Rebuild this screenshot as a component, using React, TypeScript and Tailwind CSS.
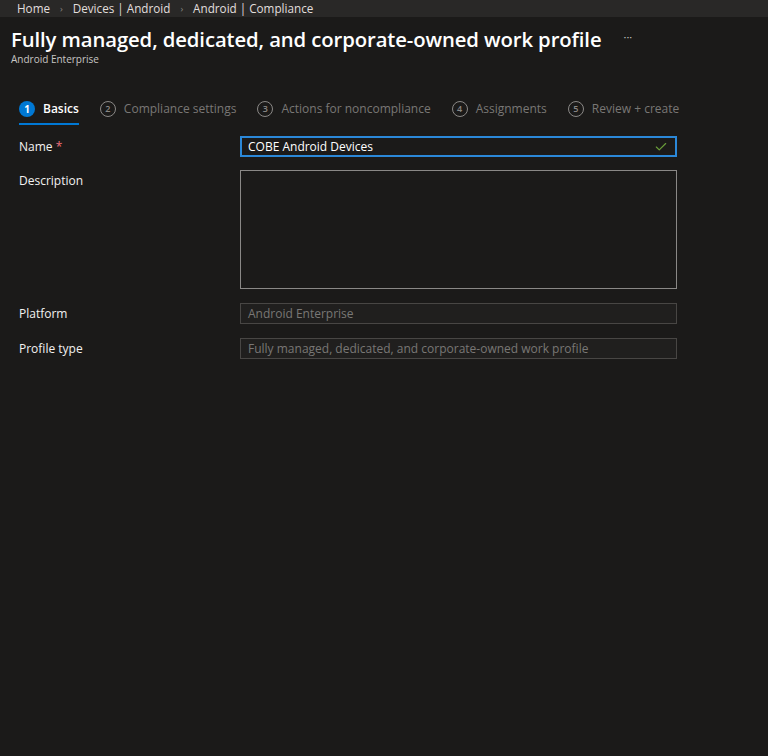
import React from "react";
import { Check } from "lucide-react";

const steps = [
  { n: 1, label: "Basics" },
  { n: 2, label: "Compliance settings" },
  { n: 3, label: "Actions for noncompliance" },
  { n: 4, label: "Assignments" },
  { n: 5, label: "Review + create" },
];

const font = { fontFamily: '"Open Sans", "Noto Sans", sans-serif' };

const App: React.FC = () => {
  return (
    <div className="w-[768px] h-[756px] bg-[#1b1a19] text-[#f3f2f1] overflow-hidden" style={font}>
      {/* Breadcrumb */}
      <div className="h-[17px] bg-[#292827] flex items-center pl-[17px] text-[11.7px] leading-none text-[#e1dfdd]">
        <span>Home</span>
        <span className="mx-[10px] text-[9px] text-[#8a8886]">›</span>
        <span>Devices | Android</span>
        <span className="mx-[10px] text-[9px] text-[#8a8886]">›</span>
        <span>Android | Compliance</span>
      </div>

      {/* Header */}
      <div className="pl-[11px] pt-[9px]">
        <div className="flex items-center">
          <h1 className="text-[20.3px] font-semibold leading-[26px] text-white tracking-[-0.1px]">
            Fully managed, dedicated, and corporate-owned work profile
          </h1>
          <span className="ml-[22px] text-[11px] text-[#c8c6c4] -mt-[4px]">···</span>
        </div>
        <div className="text-[10px] leading-[14px] text-[#c8c6c4]">Android Enterprise</div>
      </div>

      {/* Steps */}
      <div className="flex items-start pl-[19px] mt-[35px] gap-[21px]">
        {steps.map((s) => {
          const active = s.n === 1;
          return (
            <div key={s.n} className="flex flex-col">
              <div className="flex items-center gap-[8px] h-[16px]">
                {active ? (
                  <span className="w-[16px] h-[16px] rounded-full bg-[#0078d4] text-white text-[10px] font-bold flex items-center justify-center">
                    {s.n}
                  </span>
                ) : (
                  <span className="w-[16px] h-[16px] rounded-full border border-[#8a8886] text-[#8a8886] text-[9px] font-semibold flex items-center justify-center">
                    {s.n}
                  </span>
                )}
                <span
                  className={
                    active
                      ? "text-[12px] font-semibold text-white"
                      : "text-[12px] text-[#797775]"
                  }
                >
                  {s.label}
                </span>
              </div>
              {active ? <div className="h-[2px] bg-[#0078d4] mt-[6px]" /> : null}
            </div>
          );
        })}
      </div>

      {/* Form */}
      <div className="pl-[19px] pr-[91px] mt-[11px] flex flex-col text-[12px]">
        <div className="flex items-center h-[21px]">
          <label className="w-[221px] text-[#f3f2f1]">
            Name <span className="text-[#f1707b]">*</span>
          </label>
          <div className="flex-1 h-[21px] border-2 border-[#2b88d8] flex items-center pl-[6px] pr-[7px]">
            <span className="flex-1 text-white">COBE Android Devices</span>
            <Check className="w-[14px] h-[14px] text-[#6a9e3a]" strokeWidth={2} />
          </div>
        </div>

        <div className="flex mt-[13px]">
          <label className="w-[221px] pt-[2px] text-[#f3f2f1]">Description</label>
          <div className="flex-1 h-[119px] border border-[#8a8886]" />
        </div>

        <div className="flex items-center mt-[14px]">
          <label className="w-[221px] text-[#f3f2f1]">Platform</label>
          <div className="flex-1 h-[21px] border border-[#484644] bg-[#201f1e] flex items-center pl-[7px] text-[#797775]">
            Android Enterprise
          </div>
        </div>

        <div className="flex items-center mt-[14px]">
          <label className="w-[221px] text-[#f3f2f1]">Profile type</label>
          <div className="flex-1 h-[21px] border border-[#484644] bg-[#201f1e] flex items-center pl-[7px] text-[#797775]">
            Fully managed, dedicated, and corporate-owned work profile
          </div>
        </div>
      </div>
    </div>
  );
};

export default App;
